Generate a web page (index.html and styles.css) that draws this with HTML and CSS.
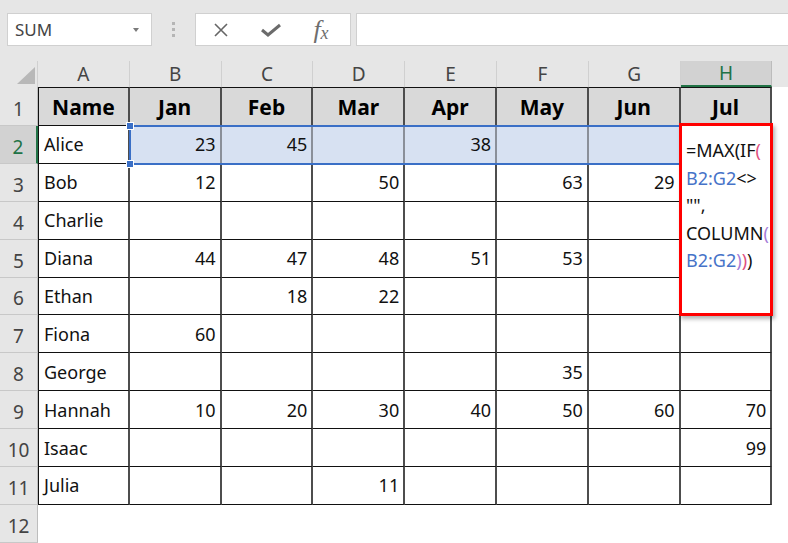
FILE: index.html
```html
<!DOCTYPE html>
<html lang="en">
<head>
    <meta charset="UTF-8">
    <title>Sheet</title>
    <link rel="stylesheet" href="styles.css">
</head>
<body>
    <div class="toolbar">
        <div class="name-box">
            <span>SUM</span>
            <span class="drop"></span>
        </div>
        <div class="grip"><i></i><i></i><i></i></div>
        <div class="fx-buttons">
            <span class="btn">
                <svg width="18" height="16" viewBox="0 0 18 16"><path d="M3 2 L15 14 M15 2 L3 14" stroke="#666" stroke-width="1.6" fill="none"/></svg>
            </span>
            <span class="btn">
                <svg width="22" height="14" viewBox="0 0 22 14"><path d="M2 7 L8 12 L20 2" stroke="#6b6b6b" stroke-width="3" fill="none"/></svg>
            </span>
            <span class="btn fx"><span class="fx-f">f</span><span class="fx-x">x</span></span>
        </div>
        <div class="formula-input"></div>
    </div>

    <div class="sheet">
        <!-- column headers -->
        <div class="corner"><svg width="38" height="26" viewBox="0 0 38 26"><polygon points="35,6 35,23 17,23" fill="#b8b8b8"/></svg></div>
        <div class="col">A</div>
        <div class="col">B</div>
        <div class="col">C</div>
        <div class="col">D</div>
        <div class="col">E</div>
        <div class="col">F</div>
        <div class="col">G</div>
        <div class="col active">H</div>
        <div class="col rest"></div>

        <!-- row 1 -->
        <div class="row">1</div>
        <div class="cell head first">Name</div>
        <div class="cell head">Jan</div>
        <div class="cell head">Feb</div>
        <div class="cell head">Mar</div>
        <div class="cell head">Apr</div>
        <div class="cell head">May</div>
        <div class="cell head">Jun</div>
        <div class="cell head">Jul</div>
        <div class="blank"></div>

        <div class="row active">2</div>
        <div class="cell first">Alice</div>
        <div class="cell num sel">23</div>
        <div class="cell num sel">45</div>
        <div class="cell num sel"></div>
        <div class="cell num sel">38</div>
        <div class="cell num sel"></div>
        <div class="cell num sel"></div>
        <div class="cell num"></div>
        <div class="blank"></div>

        <div class="row">3</div>
        <div class="cell first">Bob</div>
        <div class="cell num">12</div>
        <div class="cell num"></div>
        <div class="cell num">50</div>
        <div class="cell num"></div>
        <div class="cell num">63</div>
        <div class="cell num">29</div>
        <div class="cell num"></div>
        <div class="blank"></div>

        <div class="row">4</div>
        <div class="cell first">Charlie</div>
        <div class="cell num"></div>
        <div class="cell num"></div>
        <div class="cell num"></div>
        <div class="cell num"></div>
        <div class="cell num"></div>
        <div class="cell num"></div>
        <div class="cell num"></div>
        <div class="blank"></div>

        <div class="row">5</div>
        <div class="cell first">Diana</div>
        <div class="cell num">44</div>
        <div class="cell num">47</div>
        <div class="cell num">48</div>
        <div class="cell num">51</div>
        <div class="cell num">53</div>
        <div class="cell num"></div>
        <div class="cell num"></div>
        <div class="blank"></div>

        <div class="row">6</div>
        <div class="cell first">Ethan</div>
        <div class="cell num"></div>
        <div class="cell num">18</div>
        <div class="cell num">22</div>
        <div class="cell num"></div>
        <div class="cell num"></div>
        <div class="cell num"></div>
        <div class="cell num"></div>
        <div class="blank"></div>

        <div class="row">7</div>
        <div class="cell first">Fiona</div>
        <div class="cell num">60</div>
        <div class="cell num"></div>
        <div class="cell num"></div>
        <div class="cell num"></div>
        <div class="cell num"></div>
        <div class="cell num"></div>
        <div class="cell num"></div>
        <div class="blank"></div>

        <div class="row">8</div>
        <div class="cell first">George</div>
        <div class="cell num"></div>
        <div class="cell num"></div>
        <div class="cell num"></div>
        <div class="cell num"></div>
        <div class="cell num">35</div>
        <div class="cell num"></div>
        <div class="cell num"></div>
        <div class="blank"></div>

        <div class="row">9</div>
        <div class="cell first">Hannah</div>
        <div class="cell num">10</div>
        <div class="cell num">20</div>
        <div class="cell num">30</div>
        <div class="cell num">40</div>
        <div class="cell num">50</div>
        <div class="cell num">60</div>
        <div class="cell num">70</div>
        <div class="blank"></div>

        <div class="row">10</div>
        <div class="cell first">Isaac</div>
        <div class="cell num"></div>
        <div class="cell num"></div>
        <div class="cell num"></div>
        <div class="cell num"></div>
        <div class="cell num"></div>
        <div class="cell num"></div>
        <div class="cell num">99</div>
        <div class="blank"></div>

        <div class="row">11</div>
        <div class="cell first">Julia</div>
        <div class="cell num"></div>
        <div class="cell num"></div>
        <div class="cell num">11</div>
        <div class="cell num"></div>
        <div class="cell num"></div>
        <div class="cell num"></div>
        <div class="cell num"></div>
        <div class="blank"></div>

        <div class="row">12</div>
        <div class="blank wide"></div>

        <!-- selection B2:G2 -->
        <div class="selection">
            <span class="handle tl"></span>
            <span class="handle bl"></span>
        </div>

        <!-- formula shown in H2 -->
        <div class="formula-box">=MAX(IF<span class="p1">(</span><br><span class="ref">B2:G2</span>&lt;&gt;<br>"",<br>COLUMN<span class="p2">(</span><br><span class="ref">B2:G2</span><span class="p2">)</span><span class="p1">)</span>)</div>
    </div>
</body>
</html>
```

FILE: styles.css
```css
body {
    margin: 0;
    background: #fff;
    font-family: 'Noto Sans', 'Liberation Sans', sans-serif;
    overflow: hidden;
}

/* formula bar */
.toolbar {
    height: 61px;
    background: #e6e6e6;
    display: flex;
    align-items: flex-start;
    padding: 13px 0 0 7px;
    box-sizing: border-box;
}

.name-box {
    width: 145px;
    height: 33px;
    box-sizing: border-box;
    background: #fff;
    border: 1px solid #d0d0d0;
    display: flex;
    align-items: center;
    justify-content: space-between;
    padding: 0 12px 0 7px;
    font-size: 17px;
    color: #444;
}

.drop {
    width: 0;
    height: 0;
    border-left: 3px solid transparent;
    border-right: 3px solid transparent;
    border-top: 4px solid #7a7a7a;
}

.grip {
    width: 43px;
    height: 33px;
    display: flex;
    flex-direction: column;
    align-items: center;
    justify-content: center;
    gap: 3px;
}

.grip i {
    width: 3px;
    height: 3px;
    background: #b5b5b5;
}

.fx-buttons {
    width: 156px;
    height: 33px;
    box-sizing: border-box;
    background: #fff;
    border: 1px solid #d0d0d0;
    display: flex;
}

.btn {
    flex: 1;
    display: flex;
    align-items: center;
    justify-content: center;
}

.btn.fx {
    font-family: 'Liberation Serif', serif;
    font-style: italic;
    color: #6e6e6e;
    padding-right: 4px;
    line-height: 1;
}

.fx-f {
    font-size: 26px;
}

.fx-x {
    font-size: 18px;
    margin-top: 6px;
}

.formula-input {
    flex: 1;
    height: 33px;
    margin-left: 5px;
    margin-right: -2px;
    box-sizing: border-box;
    background: #fff;
    border: 1px solid #d0d0d0;
}

/* grid */
.sheet {
    position: relative;
    display: grid;
    grid-template-columns: 38px repeat(8, 91.8px) 1fr;
    grid-template-rows: 26px 39px repeat(11, 37.9px);
}

.corner,
.col {
    background: #e6e6e6;
    box-sizing: border-box;
}

.corner {
    border-right: 1px solid #d0d0d0;
}

.corner svg {
    display: block;
}

.col {
    border-right: 1px solid #d0d0d0;
    color: #444;
    font-size: 19px;
    text-align: center;
    line-height: 26px;
}

.col.active {
    background: #d2d2d2;
    color: #217346;
    border-bottom: 2px solid #217346;
    border-right: 1px solid #bcbcbc;
    line-height: 25px;
}

.col.rest {
    border-right: none;
}

.row {
    background: #e6e6e6;
    box-sizing: border-box;
    border-right: 1px solid #bdbdbd;
    border-bottom: 1px solid #c8c8c8;
    color: #444;
    font-size: 19px;
    line-height: 19px;
    display: flex;
    align-items: flex-end;
    justify-content: center;
    padding-bottom: 6px;
}

.row.active {
    background: #d2d2d2;
    color: #217346;
    border-right: 2px solid #217346;
}

.cell {
    box-sizing: border-box;
    border-right: 2px solid #4d4d4d;
    border-bottom: 1px solid #111;
    font-size: 18px;
    color: #111;
    display: flex;
    align-items: center;
    padding: 0 5px;
    white-space: nowrap;
}

.cell.first {
    border-left: 1px solid #111;
}

.cell.num {
    justify-content: flex-end;
    padding-right: 4px;
}

.cell.head {
    background: #d9d9d9;
    border-top: 1px solid #111;
    font-weight: bold;
    font-size: 21px;
    color: #000;
    justify-content: center;
    padding: 1px 0 0 0;
}

.cell.sel {
    background: #d7e1f2;
    border-right-color: #8a8f99;
}

.blank.wide {
    grid-column: span 9;
}

/* overlays */
.selection {
    position: absolute;
    left: 129px;
    top: 64px;
    width: 552px;
    height: 40px;
    box-sizing: border-box;
    border: 2px solid #3a6fc6;
    border-right: none;
}

.handle {
    position: absolute;
    left: -5px;
    width: 6px;
    height: 6px;
    background: #3a6fc6;
    border: 1px solid #fff;
}

.handle.tl { top: -5px; }
.handle.bl { bottom: -5px; }

.formula-box {
    position: absolute;
    left: 679px;
    top: 62px;
    width: 94px;
    height: 193px;
    box-sizing: border-box;
    background: #fff;
    border: 3px solid #f00;
    box-shadow: 2px 3px 4px rgba(0, 0, 0, 0.3);
    padding: 11px 0 0 4px;
    font-size: 18px;
    line-height: 27.6px;
    color: #111;
    white-space: nowrap;
}

.ref { color: #4673c8; }
.p1 { color: #e0507f; }
.p2 { color: #a57cd8; }
```
